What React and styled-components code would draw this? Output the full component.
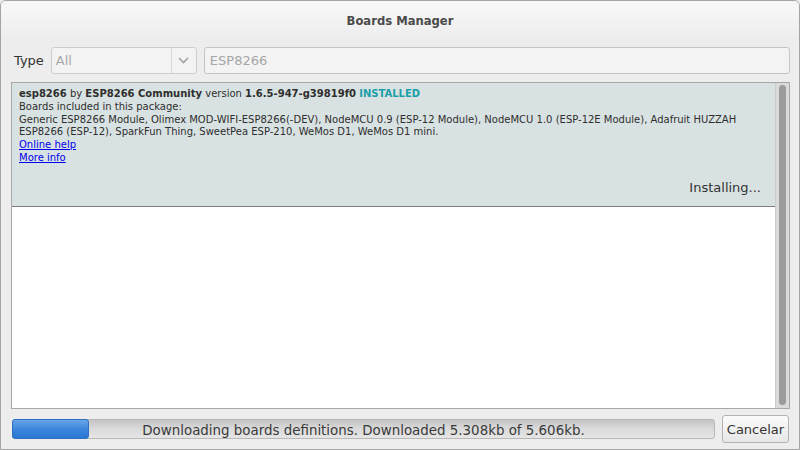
import React from "react";
import styled, { createGlobalStyle } from "styled-components";

const GlobalStyle = createGlobalStyle`
  html, body {
    margin: 0;
    padding: 0;
    background: #ededed;
  }
  * {
    box-sizing: border-box;
  }
`;

const Window = styled.div`
  width: 800px;
  height: 450px;
  display: flex;
  flex-direction: column;
  background: #ededed;
  border: 1px solid #a4a4a4;
  border-radius: 6px 6px 0 0;
  font-family: "DejaVu Sans", "Liberation Sans", sans-serif;
  color: #3c3c3c;
  overflow: hidden;
`;

const TitleBar = styled.div`
  height: 39px;
  display: flex;
  align-items: center;
  justify-content: center;
  background: linear-gradient(#f8f8f8, #ededed);
  font-size: 11.6px;
  font-weight: bold;
  color: #4a4a4a;
`;

const FilterRow = styled.div`
  display: flex;
  align-items: center;
  gap: 7px;
  padding: 7px 9px 0 13px;
`;

const Label = styled.span`
  font-size: 13px;
  color: #333;
`;

const Select = styled.div`
  width: 146px;
  height: 27px;
  display: flex;
  align-items: center;
  border: 1px solid #cdcdcd;
  border-radius: 3px;
  background: #f3f3f3;
  font-size: 13px;
  color: #a9a9a9;
`;

const SelectValue = styled.span`
  flex: 1;
  padding-left: 4px;
`;

const SelectArrow = styled.span`
  width: 25px;
  height: 100%;
  display: flex;
  align-items: center;
  justify-content: center;
  border-left: 1px solid #d6d6d6;
`;

const Search = styled.div`
  flex: 1;
  height: 27px;
  display: flex;
  align-items: center;
  padding-left: 5px;
  border: 1px solid #c4c4c4;
  border-radius: 3px;
  background: #f3f3f3;
  font-size: 13px;
  color: #a6a6a6;
`;

const List = styled.div`
  margin: 8px 9px 0 10px;
  height: 327px;
  display: flex;
  border: 1px solid #a8a8a8;
  background: #ffffff;
`;

const ListBody = styled.div`
  flex: 1;
`;

const Item = styled.div`
  height: 124px;
  display: flex;
  flex-direction: column;
  padding: 5px 14px 0 7px;
  background: #d9e2e2;
  border-bottom: 1px solid #7f7f7f;
  font-size: 10px;
  line-height: 12.8px;
  color: #2e2e2e;
`;

const Bold = styled.b`
  color: #2e2e2e;
`;

const Installed = styled.b`
  color: #1a9ea8;
`;

const Link = styled.a`
  color: #0000ee;
  text-decoration: underline;
  align-self: flex-start;
`;

const Status = styled.div`
  margin-top: auto;
  margin-bottom: 11px;
  align-self: flex-end;
  font-size: 13px;
  color: #333;
`;

const Scrollbar = styled.div`
  width: 14px;
  display: flex;
  justify-content: center;
  padding: 2px 0 3px;
  background: #dadada;
  border-left: 1px solid #cbcbcb;
`;

const Thumb = styled.div`
  width: 7px;
  height: 100%;
  border-radius: 4px;
  background: #9b9b9b;
`;

const Footer = styled.div`
  display: flex;
  align-items: center;
  gap: 7px;
  padding: 6px 10px 0 11px;
`;

const Progress = styled.div`
  position: relative;
  flex: 1;
  height: 20px;
  display: flex;
  align-items: center;
  justify-content: center;
  border: 1px solid #b8b8b8;
  border-radius: 3px;
  background: linear-gradient(#c4c4c4, #d9d9d9 45%, #e6e6e6);
  font-size: 13.4px;
  color: #3a3a3a;
`;

const Fill = styled.div`
  position: absolute;
  left: -1px;
  top: -1px;
  bottom: -1px;
  border: 1px solid #2f6fbf;
  border-radius: 3px;
  background: linear-gradient(#6aa5ea, #3c86dc 50%, #2a77d4);
`;

const ProgressText = styled.span`
  position: relative;
  top: 1px;
`;

const Button = styled.button`
  width: 67px;
  height: 28px;
  padding: 0;
  border: 1px solid #b3b3b3;
  border-radius: 3px;
  background: linear-gradient(#fbfbfb, #e7e7e7);
  font-family: "DejaVu Sans", "Liberation Sans", sans-serif;
  font-size: 13px;
  color: #333;
`;

const Chevron = () => (
  <svg width="11" height="7" viewBox="0 0 11 7">
    <path d="M1 1 L5.5 5.5 L10 1" fill="none" stroke="#a0a0a0" strokeWidth="1.6" />
  </svg>
);

export default function App() {
  const progress = 77;
  return (
    <>
      <GlobalStyle />
      <Window>
        <TitleBar>Boards Manager</TitleBar>
        <FilterRow>
          <Label>Type</Label>
          <Select>
            <SelectValue>All</SelectValue>
            <SelectArrow>
              <Chevron />
            </SelectArrow>
          </Select>
          <Search>ESP8266</Search>
        </FilterRow>
        <List>
          <ListBody>
            <Item>
              <div>
                <Bold>esp8266</Bold> by <Bold>ESP8266 Community</Bold> version{" "}
                <Bold>1.6.5-947-g39819f0</Bold> <Installed>INSTALLED</Installed>
              </div>
              <div>Boards included in this package:</div>
              <div>
                Generic ESP8266 Module, Olimex MOD-WIFI-ESP8266(-DEV), NodeMCU 0.9 (ESP-12 Module), NodeMCU
                1.0 (ESP-12E Module), Adafruit HUZZAH ESP8266 (ESP-12), SparkFun Thing, SweetPea ESP-210,
                WeMos D1, WeMos D1 mini.
              </div>
              <Link>Online help</Link>
              <Link>More info</Link>
              <Status>Installing...</Status>
            </Item>
          </ListBody>
          <Scrollbar>
            <Thumb />
          </Scrollbar>
        </List>
        <Footer>
          <Progress>
            <Fill style={{ width: progress }} />
            <ProgressText>Downloading boards definitions. Downloaded 5.308kb of 5.606kb.</ProgressText>
          </Progress>
          <Button>Cancelar</Button>
        </Footer>
      </Window>
    </>
  );
}
